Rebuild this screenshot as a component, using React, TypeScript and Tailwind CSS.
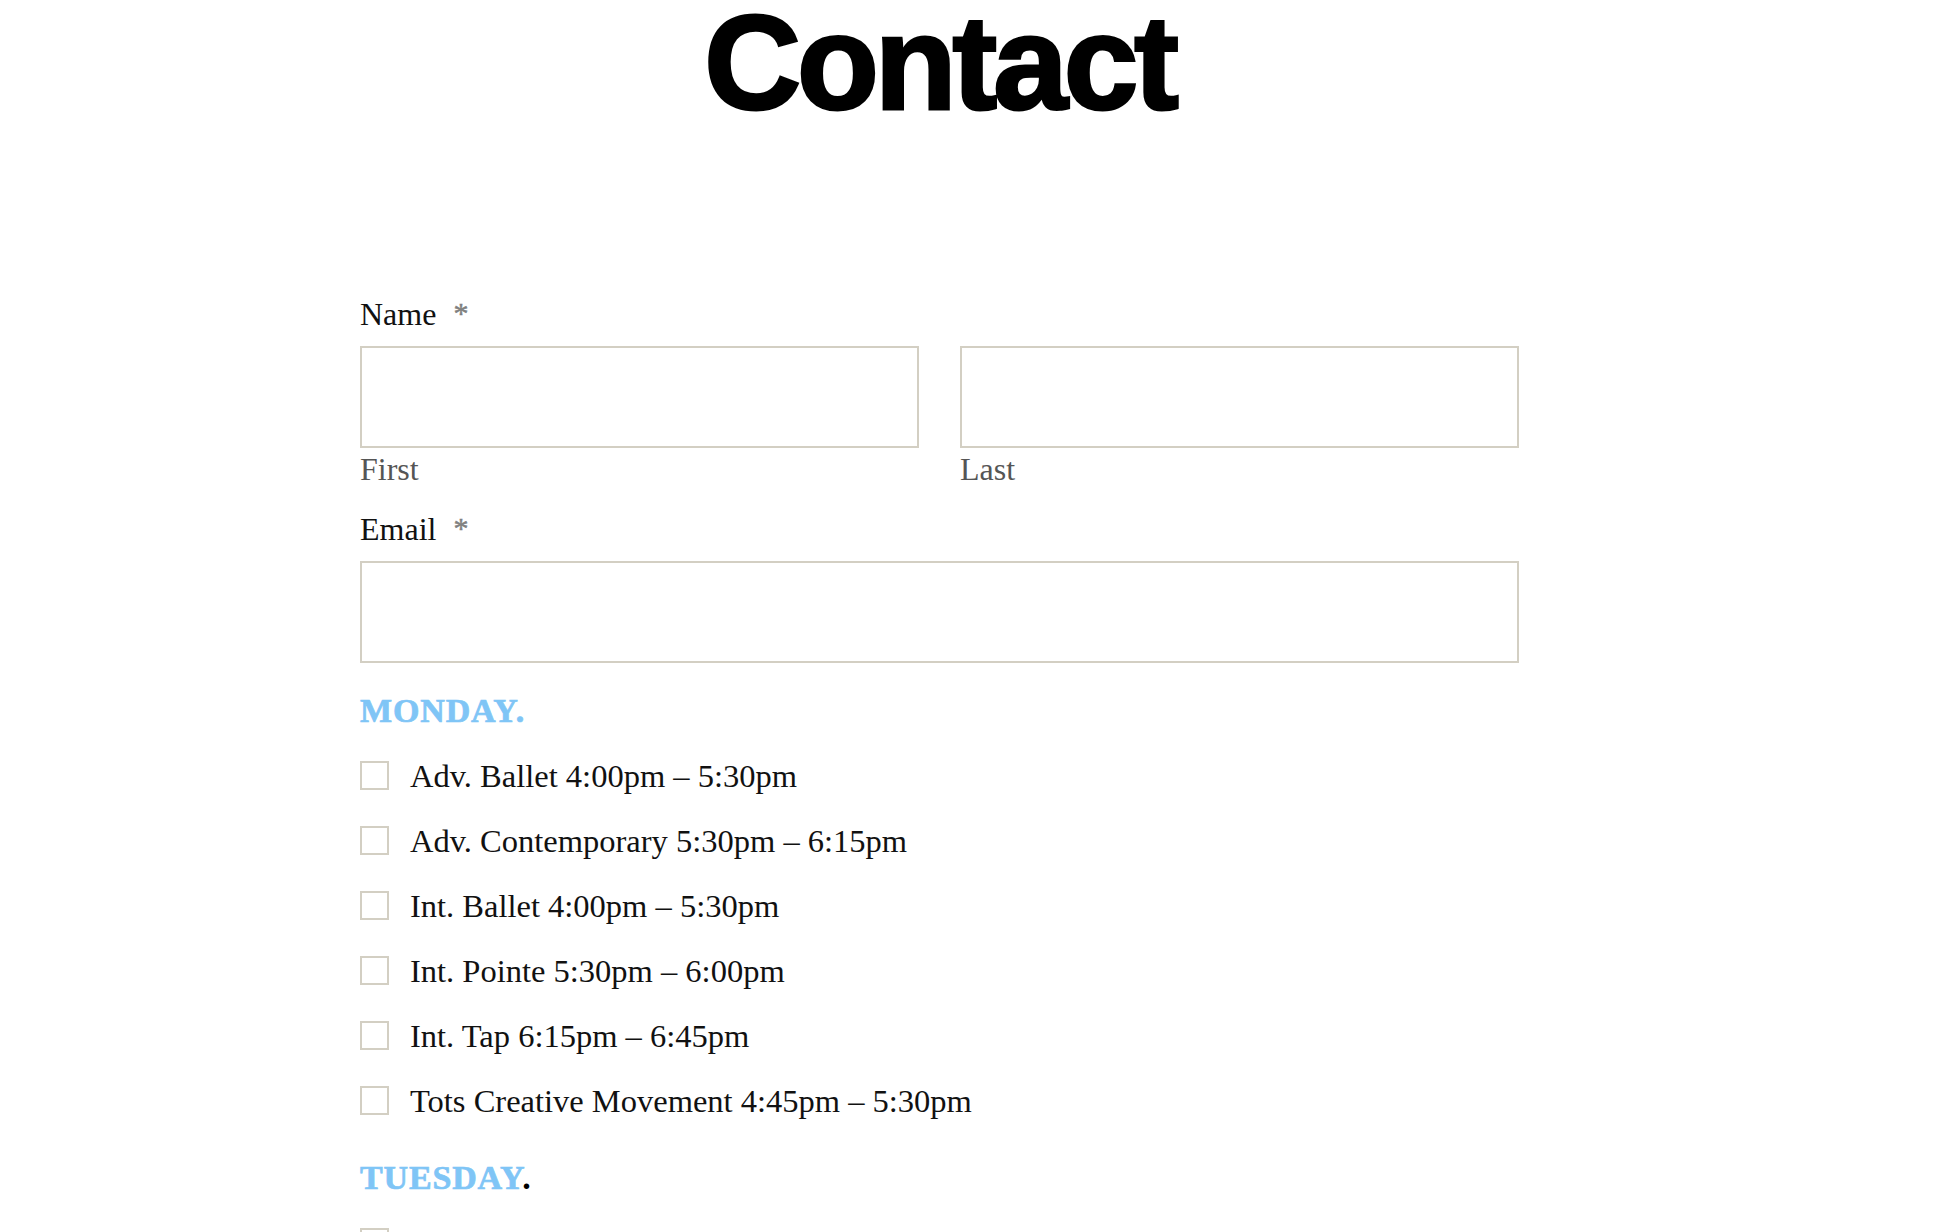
import React from "react";

const mondayClasses = [
  "Adv. Ballet 4:00pm – 5:30pm",
  "Adv. Contemporary 5:30pm – 6:15pm",
  "Int. Ballet 4:00pm – 5:30pm",
  "Int. Pointe 5:30pm – 6:00pm",
  "Int. Tap 6:15pm – 6:45pm",
  "Tots Creative Movement 4:45pm – 5:30pm",
];

const tuesdayClasses = ["Beg. Ballet 4:00pm – 5:00pm"];

function Label({ children }: { children: React.ReactNode }) {
  return (
    <div className="mb-3 flex items-start text-[32px] leading-[40px] text-[#111]">
      <span>{children}</span>
      <span className="ml-[17px] mt-[4px] text-[30px] leading-[30px] text-[#808080] [-webkit-text-stroke:0.5px_#808080]">*</span>
    </div>
  );
}

function TextBox() {
  return <input type="text" className="block h-[102px] w-full border-2 border-[#d3cfc3] bg-white px-4 outline-none" />;
}

function ClassRow({ label }: { label: string }) {
  return (
    <label className="flex h-[65px] items-center">
      <span className="block h-[29px] w-[29px] shrink-0 border-2 border-[#d3cfc3] bg-white" />
      <span className="ml-[21px] text-[32.5px] leading-[40px] text-[#111]">{label}</span>
    </label>
  );
}

function DayHeading({ day, darkDot }: { day: string; darkDot?: boolean }) {
  return (
    <h3 className="text-[34px] font-bold uppercase leading-[40px] tracking-[0.025em] text-[#7fc5f6] [-webkit-text-stroke:0.7px_#7fc5f6]">
      {day}
      <span className={darkDot ? "text-black [-webkit-text-stroke:0px]" : ""}>.</span>
    </h3>
  );
}

export default function App() {
  return (
    <div className="min-h-screen overflow-hidden bg-white" style={{ fontFamily: '"Liberation Serif", serif' }}>
      <div className="ml-[360px] w-[1159px]">
        <h1
          className="pt-px text-center text-[134px] font-bold leading-[0.92] tracking-[-0.03em] text-black [-webkit-text-stroke:3px_black]"
          style={{ fontFamily: '"Liberation Sans", Arial, sans-serif' }}
        >
          Contact
        </h1>

        <form className="mt-[170px]">
          <Label>Name</Label>
          <div className="grid grid-cols-2 gap-[41px]">
            <div>
              <TextBox />
              <div className="mt-px text-[32px] leading-[40px] text-[#555]">First</div>
            </div>
            <div>
              <TextBox />
              <div className="mt-px text-[32px] leading-[40px] text-[#555]">Last</div>
            </div>
          </div>

          <div className="mt-[20px]">
            <Label>Email</Label>
            <TextBox />
          </div>

          <div className="mt-[28px]">
            <DayHeading day="Monday" />
            <div className="mt-[12px]">
              {mondayClasses.map((c) => (
                <ClassRow key={c} label={c} />
              ))}
            </div>
          </div>

          <div className="mt-[25px]">
            <DayHeading day="Tuesday" darkDot />
            <div className="mt-[12px]">
              {tuesdayClasses.map((c) => (
                <ClassRow key={c} label={c} />
              ))}
            </div>
          </div>
        </form>
      </div>
    </div>
  );
}
